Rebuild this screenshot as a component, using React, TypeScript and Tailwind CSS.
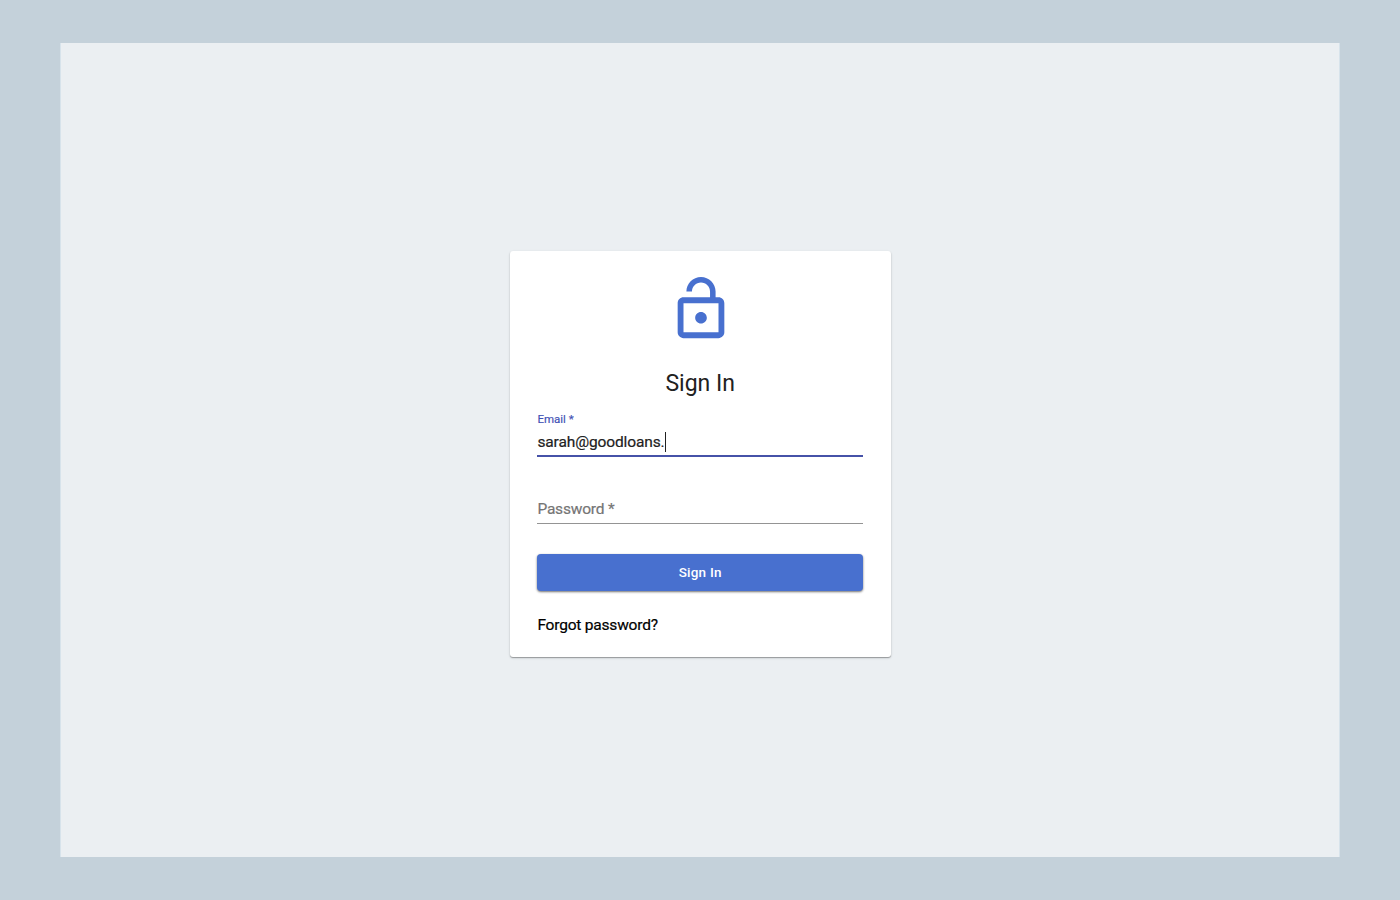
import { useState } from 'react';

function LockOpenIcon() {
  return (
    <svg viewBox="0 0 24 24" className="size-[70px] fill-[#4870cf]" aria-hidden="true">
      <path d="M12 17c1.1 0 2-.9 2-2s-.9-2-2-2-2 .9-2 2 .9 2 2 2zm6-9h-1V6c0-2.76-2.24-5-5-5S7 3.24 7 6h1.9c0-1.71 1.39-3.1 3.1-3.1 1.71 0 3.1 1.39 3.1 3.1v2H6c-1.1 0-2 .9-2 2v10c0 1.1.9 2 2 2h12c1.1 0 2-.9 2-2V10c0-1.1-.9-2-2-2zm0 12H6V10h12v10z" />
    </svg>
  );
}

export default function App() {
  const [email] = useState('sarah@goodloans.');

  return (
    <div className="h-screen bg-[#c4d1da] px-[60px] py-[43px] font-['Roboto',sans-serif]">
      <main className="flex h-[814px] justify-center border-x border-[#d7e3eb] bg-[#ebeff2] pt-[208px] pl-px">
        <form className="flex h-[406px] w-[381px] flex-col rounded-[3px] bg-white pr-[28px] pl-[27.4px] pt-[23px] shadow-[0_1px_1px_rgba(0,0,0,0.3),0_1px_3px_rgba(0,0,0,0.12)]">
          <div className="flex justify-center pl-px">
            <LockOpenIcon />
          </div>
          <h1 className="mt-[26px] text-center text-[23px] leading-[28px] text-[#212121]">Sign In</h1>

          <div className="mt-[13px] flex h-[46px] flex-col border-b-2 border-[#4652a8]">
            <label className="text-[11.5px] leading-[16px] text-[#3f51b5] [-webkit-text-stroke:0.15px]">Email *</label>
            <div className="mt-[5px] flex h-[20px] items-center text-[15.5px] leading-[20px] tracking-[-0.12px] text-[#212121]">
              <span className="[-webkit-text-stroke:0.2px]">{email}</span>
              <span className="h-[20px] w-px bg-[#212121]" />
            </div>
          </div>

          <div className="mt-[42px] flex h-[25px] border-b border-[#949494]">
            <label className="text-[15.5px] leading-[20px] tracking-[-0.2px] text-[#757575] [-webkit-text-stroke:0.2px]">
              Password *
            </label>
          </div>

          <button
            type="button"
            className="mt-[30px] h-[37px] shrink-0 rounded-[4px] bg-[#4870cf] text-[13.5px] font-medium tracking-[0.2px] text-white shadow-[0_1px_2px_rgba(0,0,0,0.4),0_1px_3px_rgba(0,0,0,0.2)]"
          >
            Sign In
          </button>
          <a className="mt-[24px] text-[15.5px] leading-[20px] tracking-[-0.2px] text-black [-webkit-text-stroke:0.2px]">
            Forgot password?
          </a>
        </form>
      </main>
    </div>
  );
}
